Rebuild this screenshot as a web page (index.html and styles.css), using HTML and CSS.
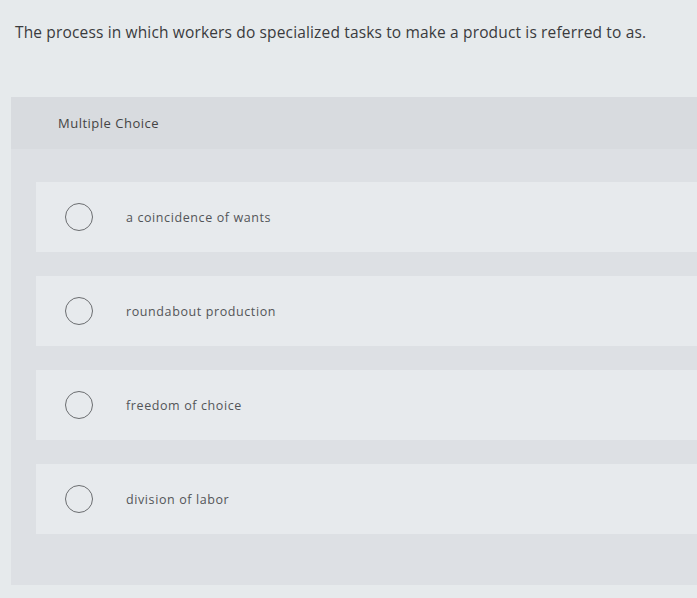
FILE: index.html
```html
<!DOCTYPE html>
<html>
<head>
<meta charset="utf-8">
<link rel="stylesheet" href="styles.css">
</head>
<body>
<div class="page">
  <p class="question">The process in which workers do specialized tasks to make a product is referred to as.</p>
  <div class="panel">
    <div class="panel-head">Multiple Choice</div>
    <div class="options">
      <div class="option"><span class="radio"></span><span class="label">a coincidence of wants</span></div>
      <div class="option"><span class="radio"></span><span class="label">roundabout production</span></div>
      <div class="option"><span class="radio"></span><span class="label">freedom of choice</span></div>
      <div class="option"><span class="radio"></span><span class="label">division of labor</span></div>
    </div>
  </div>
</div>
</body>
</html>
```

FILE: styles.css
```css
html, body {
  margin: 0;
  padding: 0;
  background: #e6eaec;
  font-family: "Open Sans", "Lato", sans-serif;
}
.page {
  width: 697px;
  height: 598px;
  overflow: hidden;
}
.question {
  margin: 0;
  padding: 22px 0 0 15px;
  font-size: 15.5px;
  line-height: 20px;
  color: #3a3b3d;
  letter-spacing: 0.15px;
}
.panel {
  margin: 55px 0 0 11px;
  height: 488px;
  background: #dde0e4;
}
.panel-head {
  height: 52px;
  padding-left: 47px;
  display: flex;
  align-items: center;
  font-size: 13px;
  letter-spacing: 0.5px;
  color: #444;
  background: #d8dbdf;
}
.options {
  display: flex;
  flex-direction: column;
  gap: 24px;
  padding: 33px 0 0 25px;
}
.option {
  height: 70px;
  background: #e7eaed;
  display: flex;
  align-items: center;
  padding-left: 29px;
}
.radio {
  width: 28px;
  height: 28px;
  border: 1.5px solid #6b6d70;
  border-radius: 50%;
  box-sizing: border-box;
  flex: none;
}
.label {
  margin-left: 33px;
  font-size: 12.5px;
  color: #535558;
  letter-spacing: 0.6px;
}
```
